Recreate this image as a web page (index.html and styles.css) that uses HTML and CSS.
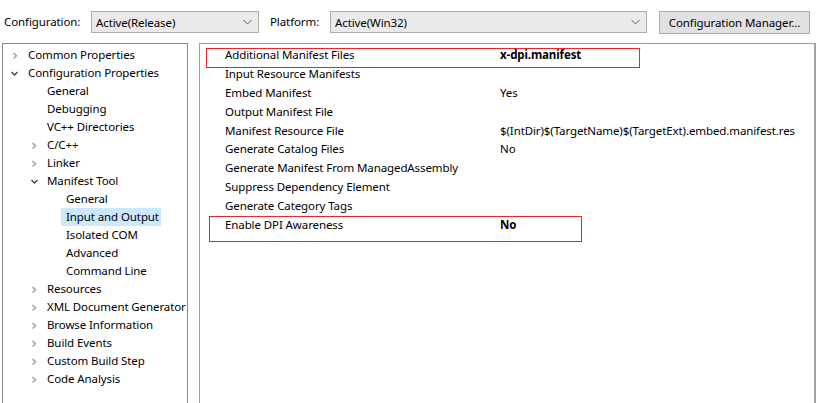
FILE: index.html
```html
<!DOCTYPE html>
<html>
<head>
<meta charset="utf-8">
<link rel="stylesheet" href="styles.css">
</head>
<body>
<div class="topbar">
  <span class="lbl lbl-config">Configuration:</span>
  <div class="combo combo-config"><span>Active(Release)</span>
    <svg class="dd" width="9" height="6" viewBox="0 0 9 6"><path d="M0.5 1 L4.5 5 L8.5 1" fill="none" stroke="#606060" stroke-width="1"/></svg>
  </div>
  <span class="lbl lbl-platform">Platform:</span>
  <div class="combo combo-platform"><span>Active(Win32)</span>
    <svg class="dd" width="9" height="6" viewBox="0 0 9 6"><path d="M0.5 1 L4.5 5 L8.5 1" fill="none" stroke="#606060" stroke-width="1"/></svg>
  </div>
  <div class="btn">Configuration Manager...</div>
</div>
<div class="main">
  <div class="tree">
    <div class="row l0"><svg class="chev" viewBox="0 0 17 18"><path d="M2.5 7 L5.5 9.8 L2.5 12.6" fill="none" stroke="#9e9e9e" stroke-width="1.4"/></svg><span>Common Properties</span></div>
    <div class="row l0"><svg class="chev" viewBox="0 0 17 18"><path d="M0.5 8 L3.5 11 L6.5 8" fill="none" stroke="#404040" stroke-width="1.3"/></svg><span>Configuration Properties</span></div>
    <div class="row l1"><span class="nochev"></span><span>General</span></div>
    <div class="row l1"><span class="nochev"></span><span>Debugging</span></div>
    <div class="row l1"><span class="nochev"></span><span>VC++ Directories</span></div>
    <div class="row l1"><svg class="chev" viewBox="0 0 17 18"><path d="M2.5 7 L5.5 9.8 L2.5 12.6" fill="none" stroke="#9e9e9e" stroke-width="1.4"/></svg><span>C/C++</span></div>
    <div class="row l1"><svg class="chev" viewBox="0 0 17 18"><path d="M2.5 7 L5.5 9.8 L2.5 12.6" fill="none" stroke="#9e9e9e" stroke-width="1.4"/></svg><span>Linker</span></div>
    <div class="row l1"><svg class="chev" viewBox="0 0 17 18"><path d="M1.5 8 L4.5 11 L7.5 8" fill="none" stroke="#404040" stroke-width="1.3"/></svg><span>Manifest Tool</span></div>
    <div class="row l2"><span class="nochev"></span><span>General</span></div>
    <div class="row l2"><span class="nochev"></span><span class="sel">Input and Output</span></div>
    <div class="row l2"><span class="nochev"></span><span>Isolated COM</span></div>
    <div class="row l2"><span class="nochev"></span><span>Advanced</span></div>
    <div class="row l2"><span class="nochev"></span><span>Command Line</span></div>
    <div class="row l1"><svg class="chev" viewBox="0 0 17 18"><path d="M2.5 7 L5.5 9.8 L2.5 12.6" fill="none" stroke="#9e9e9e" stroke-width="1.4"/></svg><span>Resources</span></div>
    <div class="row l1"><svg class="chev" viewBox="0 0 17 18"><path d="M2.5 7 L5.5 9.8 L2.5 12.6" fill="none" stroke="#9e9e9e" stroke-width="1.4"/></svg><span>XML Document Generator</span></div>
    <div class="row l1"><svg class="chev" viewBox="0 0 17 18"><path d="M2.5 7 L5.5 9.8 L2.5 12.6" fill="none" stroke="#9e9e9e" stroke-width="1.4"/></svg><span>Browse Information</span></div>
    <div class="row l1"><svg class="chev" viewBox="0 0 17 18"><path d="M2.5 7 L5.5 9.8 L2.5 12.6" fill="none" stroke="#9e9e9e" stroke-width="1.4"/></svg><span>Build Events</span></div>
    <div class="row l1"><svg class="chev" viewBox="0 0 17 18"><path d="M2.5 7 L5.5 9.8 L2.5 12.6" fill="none" stroke="#9e9e9e" stroke-width="1.4"/></svg><span>Custom Build Step</span></div>
    <div class="row l1"><svg class="chev" viewBox="0 0 17 18"><path d="M2.5 7 L5.5 9.8 L2.5 12.6" fill="none" stroke="#9e9e9e" stroke-width="1.4"/></svg><span>Code Analysis</span></div>
  </div>
  <div class="grid">
    <div class="prop"><span class="name">Additional Manifest Files</span><span class="val bold">x-dpi.manifest</span></div>
    <div class="prop"><span class="name">Input Resource Manifests</span><span class="val"></span></div>
    <div class="prop"><span class="name">Embed Manifest</span><span class="val">Yes</span></div>
    <div class="prop"><span class="name">Output Manifest File</span><span class="val"></span></div>
    <div class="prop"><span class="name">Manifest Resource File</span><span class="val">$(IntDir)$(TargetName)$(TargetExt).embed.manifest.res</span></div>
    <div class="prop"><span class="name">Generate Catalog Files</span><span class="val">No</span></div>
    <div class="prop"><span class="name">Generate Manifest From ManagedAssembly</span><span class="val"></span></div>
    <div class="prop"><span class="name">Suppress Dependency Element</span><span class="val"></span></div>
    <div class="prop"><span class="name">Generate Category Tags</span><span class="val"></span></div>
    <div class="prop"><span class="name">Enable DPI Awareness</span><span class="val bold">No</span></div>
    <div class="mark mark-1"></div>
    <div class="mark mark-2"></div>
  </div>
</div>
</body>
</html>
```
FILE: styles.css
```css
html, body {
  margin: 0;
  padding: 0;
  background: #ffffff;
  overflow: hidden;
}
body {
  width: 819px;
  height: 403px;
  font-family: "Noto Sans", "Open Sans", sans-serif;
  font-size: 11.5px;
  letter-spacing: -0.1px;
  color: #000000;
}
.topbar {
  display: flex;
  align-items: center;
  height: 43px;
  padding-left: 4px;
  box-sizing: border-box;
  padding-top: 1px;
}
.lbl {
  line-height: 22px;
}
.lbl-config {
  width: 87px;
}
.lbl-platform {
  width: 60px;
  margin-left: 11px;
}
.combo {
  height: 22px;
  box-sizing: border-box;
  border: 1px solid #acacac;
  background: #eaeaea;
  display: flex;
  align-items: center;
  justify-content: space-between;
  padding: 0 6px 0 4px;
}
.combo-config {
  width: 168px;
}
.combo-platform {
  width: 317px;
}
.dd {
  display: block;
}
.btn {
  margin-left: 12px;
  width: 151px;
  height: 23px;
  box-sizing: border-box;
  border: 1px solid #adadad;
  background: #e1e1e1;
  display: flex;
  align-items: center;
  justify-content: center;
}
.main {
  display: flex;
  align-items: flex-start;
}
.tree {
  margin-left: 2px;
  width: 186px;
  height: 360px;
  box-sizing: border-box;
  border: 1px solid #828790;
  border-bottom: none;
  padding-top: 2px;
}
.row {
  display: flex;
  align-items: center;
  height: 18px;
  white-space: nowrap;
}
.row span {
  line-height: 18px;
}
.l0 { padding-left: 8px; }
.l1 { padding-left: 27px; }
.l2 { padding-left: 46px; }
.chev, .nochev {
  flex: none;
  display: block;
  width: 17px;
  height: 18px;
}
.sel {
  background: #cce8ff;
  margin-left: -5px;
  padding: 0 5px 0 5px;
  width: 90px;
}
.grid {
  position: relative;
  margin-left: 11px;
  width: 617px;
  height: 360px;
  box-sizing: border-box;
  border: 1px solid #a0a0a0;
  border-right-width: 2px;
  border-bottom: none;
  padding-top: 1px;
}
.prop {
  display: flex;
  height: 18.9px;
  align-items: center;
  white-space: nowrap;
}
.name {
  width: 300px;
  padding-left: 25px;
  box-sizing: border-box;
  flex: none;
}
.val {
  flex: none;
}
.bold {
  font-weight: bold;
}
.mark {
  position: absolute;
  border: 1px solid #e8262b;
  box-sizing: border-box;
}
.mark-1 {
  left: 6px;
  top: 4px;
  width: 434px;
  height: 20px;
}
.mark-2 {
  left: 9px;
  top: 172px;
  width: 373px;
  height: 26px;
}
```
